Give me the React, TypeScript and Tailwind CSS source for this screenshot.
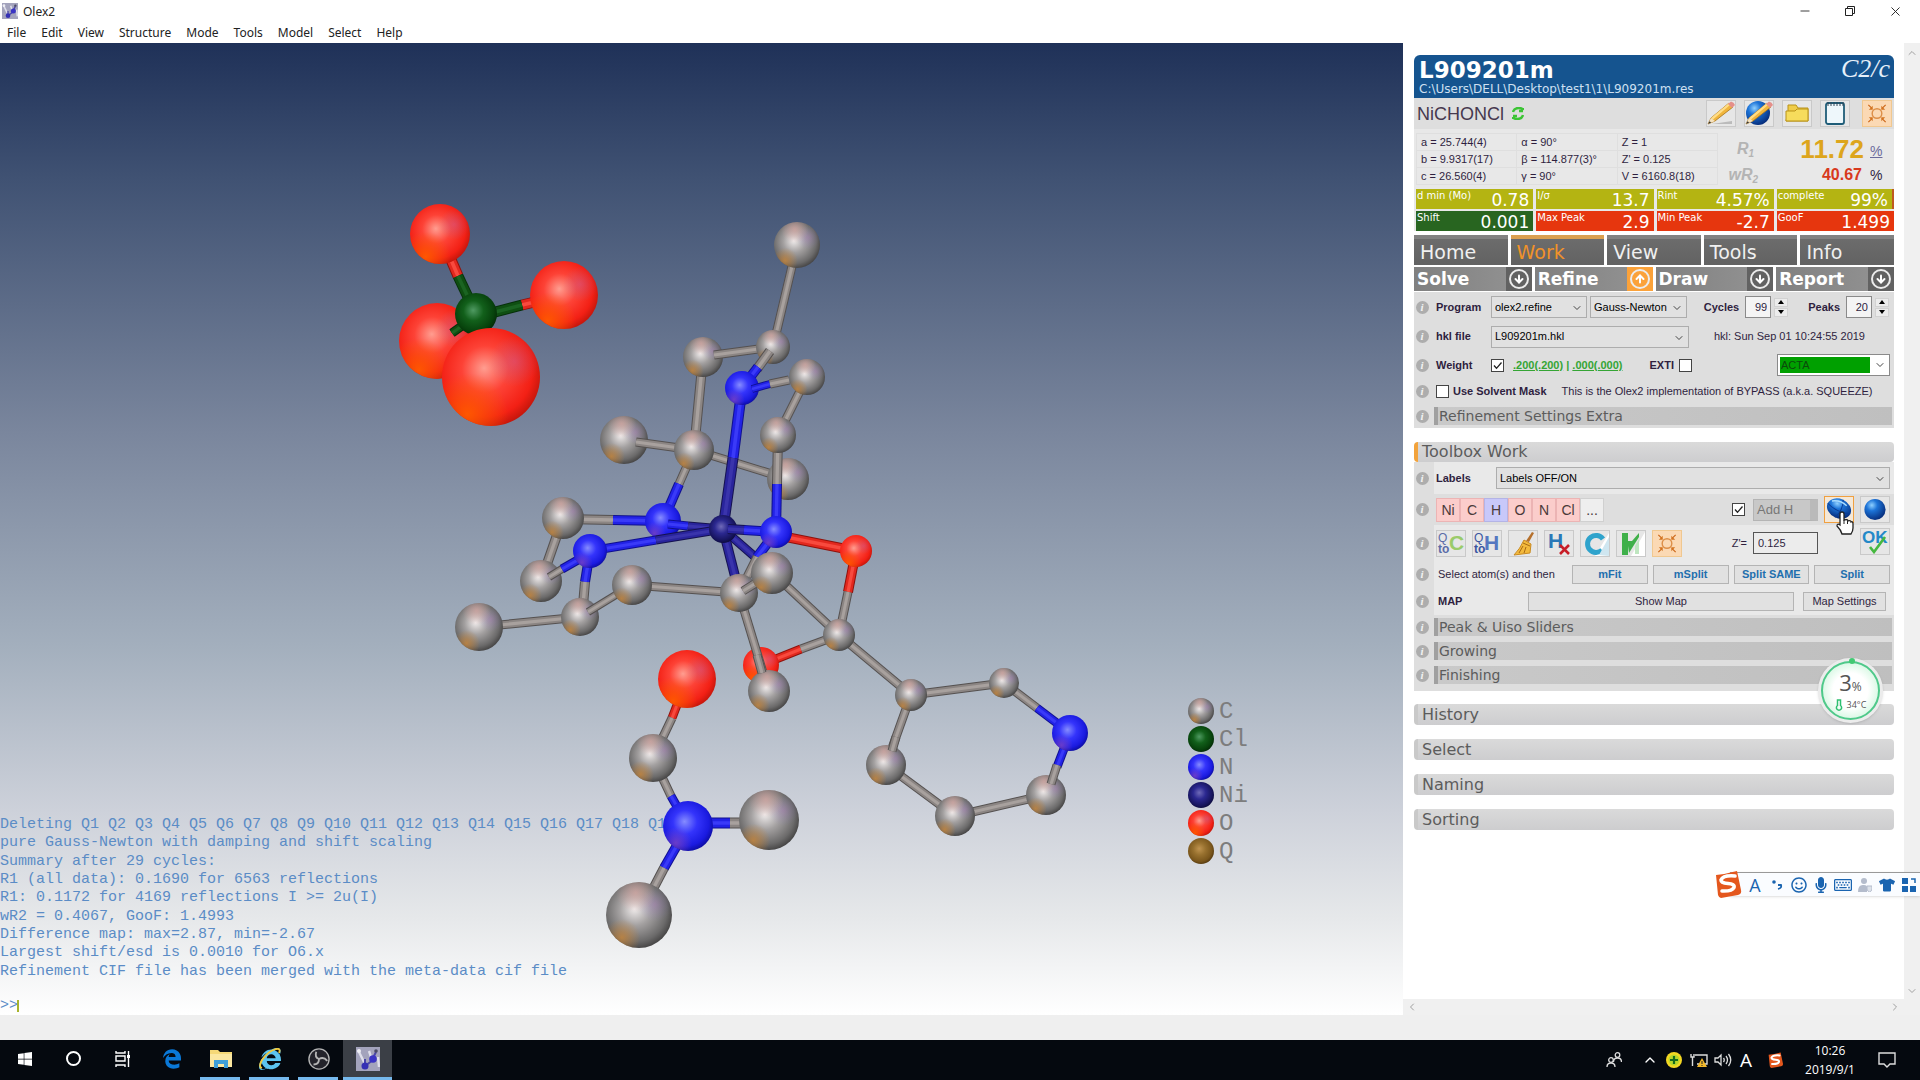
import React from "react";
import { FaInternetExplorer, FaMicrophone, FaRegKeyboard, FaRegSmile, FaTshirt, FaWindows } from "react-icons/fa";
import { FaEdgeLegacy } from "react-icons/fa6";
import { ArrowDown, ArrowUp, ChevronDown, ChevronLeft, ChevronRight, ChevronUp, Minus, X } from "lucide-react";

/* ---------- molecule model ---------- */

type El = "C" | "Cl" | "N" | "Ni" | "O" | "Q";

const SHADES: Record<El, { hi: string; mid: string; low: string; edge: string; bond: string; dark: string; light: string }> = {
  C: { hi: "#efebeb", mid: "#a3a0a0", low: "#6b6a6a", edge: "#3c3b3b", bond: "#8b8583", dark: "#555150", light: "#a8a19e" },
  Cl: { hi: "#4f9a62", mid: "#12601b", low: "#07430c", edge: "#032406", bond: "#0f4f12", dark: "#06300a", light: "#1b6422" },
  N: { hi: "#868cff", mid: "#3434fb", low: "#1a1ae0", edge: "#0a0a94", bond: "#2222e6", dark: "#10108e", light: "#3a3af8" },
  Ni: { hi: "#6f6ab8", mid: "#2b2890", low: "#17155f", edge: "#0a0938", bond: "#29249c", dark: "#15124f", light: "#3a34ac" },
  O: { hi: "#ff9d90", mid: "#fd4236", low: "#f32015", edge: "#b91409", bond: "#e2281e", dark: "#8e120c", light: "#f84a3e" },
  Q: { hi: "#c09450", mid: "#97702e", low: "#7a561c", edge: "#4d340e", bond: "#94692a", dark: "#5d3f12", light: "#c89a52" },
};

type Part =
  | { k: "a"; el: El; x: number; y: number; r: number }
  | { k: "b"; el: El; p: [number, number, number, number]; w: number };

const a = (el: El, x: number, y: number, r: number): Part => ({ k: "a", el, x, y, r });
const b = (el: El, x1: number, y1: number, x2: number, y2: number, w = 9): Part => ({ k: "b", el, p: [x1, y1, x2, y2], w });

/* Painted back to front. */
const PARTS: Part[] = [
  a("O", 437, 341, 38),
  b("O", 440, 234, 458, 276, 11), b("Cl", 458, 276, 476, 314, 11),
  b("O", 564, 295, 522, 305, 11), b("Cl", 522, 305, 476, 317, 11),
  a("O", 440, 234, 30), a("O", 564, 295, 34),
  b("Cl", 476, 316, 452, 333, 9), a("Cl", 476, 314, 21), a("O", 491, 377, 49),

  b("C", 694, 450, 788, 479), a("C", 788, 479, 21),
  b("C", 778, 435, 777, 484, 10), b("N", 777, 484, 776, 532, 10),
  b("C", 797, 245, 773, 347), a("C", 797, 245, 23),
  b("C", 703, 357, 694, 450, 10), a("C", 703, 357, 20),
  b("C", 714, 355, 773, 347), a("C", 773, 347, 17),
  b("C", 770, 351, 757, 369, 10), b("N", 758, 367, 742, 388, 10),
  b("C", 807, 377, 778, 435), a("C", 807, 377, 18), a("C", 778, 435, 18),
  b("N", 742, 388, 733, 458, 11), b("Ni", 733, 458, 723, 529, 11),
  a("N", 742, 388, 17), b("N", 752, 389, 770, 384, 8), b("C", 770, 384, 789, 380, 9),
  a("C", 624, 440, 24), b("C", 636, 442, 694, 450),
  b("C", 694, 450, 679, 484), b("N", 679, 484, 663, 521, 10), a("C", 694, 450, 20),

  b("C", 563, 518, 541, 581, 10), b("C", 563, 519, 613, 520, 10), b("N", 613, 520, 663, 521, 10),
  a("C", 563, 518, 21), a("N", 663, 521, 18),
  b("N", 668, 524, 688, 526, 9), b("Ni", 688, 526, 723, 529, 9),
  b("N", 590, 551, 656, 540), b("Ni", 656, 540, 723, 529),
  a("C", 541, 581, 21), b("C", 549, 577, 562, 569, 8), b("N", 562, 569, 590, 553),
  b("N", 590, 551, 585, 582, 10), b("C", 585, 582, 582, 617, 10), a("N", 590, 551, 17),
  b("C", 479, 627, 580, 617), a("C", 479, 627, 24), a("C", 580, 617, 19),
  b("C", 588, 612, 632, 585, 8), b("C", 632, 585, 739, 593), a("C", 632, 585, 20),

  b("Ni", 723, 529, 762, 563), b("C", 762, 563, 839, 635, 9),
  b("Ni", 723, 529, 739, 592, 10), b("O", 739, 592, 761, 665, 6),
  b("O", 776, 535, 856, 551, 10), b("N", 776, 532, 757, 557, 10), b("C", 757, 557, 739, 593, 9),
  a("Ni", 723, 529, 14), b("Ni", 728, 529, 745, 530, 10), b("N", 744, 530, 776, 532, 10), a("N", 776, 532, 16),
  b("O", 856, 551, 848, 592, 10), b("C", 848, 592, 839, 635, 9), a("O", 856, 551, 16),
  b("O", 761, 665, 801, 649, 9), b("C", 801, 649, 839, 635, 9), a("O", 761, 665, 18),
  b("C", 741, 600, 764, 676, 9), a("C", 739, 593, 19), b("C", 743, 591, 772, 573, 9), a("C", 772, 573, 21),
  a("C", 769, 691, 21), b("C", 757, 655, 762, 673, 9),

  b("C", 839, 635, 911, 695), a("C", 839, 635, 16),
  b("C", 911, 695, 1004, 683), b("C", 911, 695, 886, 765), b("C", 886, 765, 955, 816), b("C", 955, 816, 1046, 795),
  b("C", 1004, 683, 1037, 708), b("N", 1037, 708, 1070, 733), b("N", 1070, 733, 1057, 767),
  a("C", 911, 695, 16), a("C", 1004, 683, 15), a("N", 1070, 733, 18), a("C", 886, 765, 20), a("C", 955, 816, 20), a("C", 1046, 795, 20),
  b("C", 1057, 765, 1051, 784, 9), b("C", 896, 737, 892, 751, 9),

  b("O", 687, 679, 672, 718), b("C", 672, 718, 653, 758), b("C", 653, 758, 671, 796), b("N", 671, 796, 688, 826),
  b("N", 688, 823, 730, 823, 11), b("C", 730, 823, 769, 823, 11), b("N", 688, 826, 664, 868, 10), b("C", 664, 868, 641, 912, 10),
  a("O", 687, 679, 29), a("C", 653, 758, 24), a("N", 688, 826, 25), a("C", 769, 820, 30), a("C", 639, 915, 33),
];

const LEGEND: El[] = ["C", "Cl", "N", "Ni", "O", "Q"];

function Sphere({ el, x, y, r }: { el: El; x: number; y: number; r: number }) {
  return (
    <g>
      <circle cx={x} cy={y} r={r} fill={`url(#s-${el})`} />
      {(el === "C" || el === "O" || el === "N") && <circle cx={x} cy={y} r={r} fill={`url(#warm-${el})`} />}
      {(el === "C" || el === "O") && <circle cx={x} cy={y} r={r} fill="url(#cool)" />}
      {el === "C" && <circle cx={x} cy={y} r={r} fill="url(#pink)" />}
    </g>
  );
}

function Molecule() {
  return (
    <svg className="absolute left-0 top-0 h-full w-full" viewBox="0 43 1403 972" preserveAspectRatio="xMinYMin meet" role="img" aria-label="Crystal structure">
      <defs>
        {LEGEND.map((el) => (
          <radialGradient key={el} id={`s-${el}`} cx="0.46" cy="0.44" r="0.6" fx="0.43" fy="0.41">
            <stop offset="0" stopColor={SHADES[el].hi} />
            <stop offset="0.4" stopColor={SHADES[el].mid} />
            <stop offset="0.78" stopColor={SHADES[el].low} />
            <stop offset="1" stopColor={SHADES[el].edge} />
          </radialGradient>
        ))}
        <radialGradient id="warm-C" cx="0.24" cy="0.84" r="0.28">
          <stop offset="0" stopColor="#c8873c" stopOpacity="0.8" />
          <stop offset="1" stopColor="#c8873c" stopOpacity="0" />
        </radialGradient>
        <radialGradient id="warm-O" cx="0.26" cy="0.88" r="0.42">
          <stop offset="0" stopColor="#ff5a00" stopOpacity="0.95" />
          <stop offset="1" stopColor="#ff5a00" stopOpacity="0" />
        </radialGradient>
        <radialGradient id="warm-N" cx="0.26" cy="0.84" r="0.32">
          <stop offset="0" stopColor="#8a4ac0" stopOpacity="0.7" />
          <stop offset="1" stopColor="#8a4ac0" stopOpacity="0" />
        </radialGradient>
        <radialGradient id="pink" cx="0.45" cy="0.16" r="0.3">
          <stop offset="0" stopColor="#e0a8a2" stopOpacity="0.6" />
          <stop offset="1" stopColor="#e0a8a2" stopOpacity="0" />
        </radialGradient>
        <radialGradient id="cool" cx="0.74" cy="0.34" r="0.26">
          <stop offset="0" stopColor="#b070d0" stopOpacity="0.3" />
          <stop offset="1" stopColor="#8a80d0" stopOpacity="0" />
        </radialGradient>
      </defs>
      {PARTS.map((p, i) => {
        if (p.k === "a") return <Sphere key={i} el={p.el} x={p.x} y={p.y} r={p.r} />;
        const [x1, y1, x2, y2] = p.p;
        const s = SHADES[p.el];
        return (
          <g key={i}>
            <line x1={x1} y1={y1} x2={x2} y2={y2} stroke={s.dark} strokeWidth={p.w} />
            <line x1={x1} y1={y1} x2={x2} y2={y2} stroke={s.bond} strokeWidth={p.w - 2} />
            <line x1={x1} y1={y1} x2={x2} y2={y2} stroke={s.light} strokeWidth={p.w / 3} />
          </g>
        );
      })}
      {LEGEND.map((el, i) => (
        <g key={el}>
          <Sphere el={el} x={1201} y={711 + i * 28} r={13} />
          <text x="1219" y={718 + i * 28} fill="#7d7d7d" fontSize="24" fontFamily='"Liberation Mono", monospace'>{el}</text>
        </g>
      ))}
    </svg>
  );
}

const LOG = [
  "Deleting Q1 Q2 Q3 Q4 Q5 Q6 Q7 Q8 Q9 Q10 Q11 Q12 Q13 Q14 Q15 Q16 Q17 Q18 Q1",
  "pure Gauss-Newton with damping and shift scaling",
  "Summary after 29 cycles:",
  "R1 (all data): 0.1690 for 6563 reflections",
  "R1: 0.1172 for 4169 reflections I >= 2u(I)",
  "wR2 = 0.4067, GooF: 1.4993",
  "Difference map: max=2.87, min=-2.67",
  "Largest shift/esd is 0.0010 for O6.x",
  "Refinement CIF file has been merged with the meta-data cif file",
];

/* ---------- small pictures ---------- */

function OlexIcon({ className }: { className: string }) {
  return (
    <svg viewBox="0 0 24 24" className={className} aria-hidden="true">
      <rect width="24" height="24" fill="#a3a3bc" />
      <path d="M2 3l7 14M13 4l3 9M22 10l1 10" stroke="#dedeea" strokeWidth="2.400" fill="none" />
      <path d="M9 19V12M16 13l4-8M9 19l8-6" stroke="#4a46a8" strokeWidth="2" fill="none" />
      <circle cx="9" cy="19" r="3.500" fill="#3530b4" />
      <circle cx="17" cy="12" r="3.800" fill="#3a34c4" />
      <circle cx="20" cy="4" r="1.800" fill="#4a4a66" />
      <circle cx="3" cy="4" r="2" fill="#eeeef4" />
    </svg>
  );
}

function Pencil() {
  return (
    <g>
      <path d="M1 23l3-6L22 2l4 4L8 20z" fill="#f0b53c" stroke="#a8741c" strokeWidth="0.8" />
      <path d="M4 17L22 2l1.600 1.600L6 18.600z" fill="#ffdd86" />
      <path d="M21 3l3-2.600q3 .6 4 3.600L25 7z" fill="#e58f8a" />
      <path d="M1 23l3-6 4 3z" fill="#f4e2c0" />
      <path d="M1 23l1.500-2.800 1.700 1.200z" fill="#333" />
    </g>
  );
}

function Ball({ ellipse = false }: { ellipse?: boolean }) {
  return (
    <svg viewBox="0 0 28 26" className="h-full w-full" aria-hidden="true">
      <defs>
        <radialGradient id="ball" cx="0.35" cy="0.3" r="0.75">
          <stop offset="0" stopColor="#8fd0ff" />
          <stop offset="0.35" stopColor="#1d74d8" />
          <stop offset="1" stopColor="#052a78" />
        </radialGradient>
      </defs>
      {ellipse ? (
        <g transform="rotate(25 14 12)">
          <ellipse cx="14" cy="12" rx="13" ry="10" fill="url(#ball)" />
          <path d="M1 12q13 5 26 0M14 2q5 10 0 20" stroke="#0b3c94" fill="none" />
          <path d="M4 8q8-5 16-2" stroke="#a8dcff" strokeWidth="1.500" fill="none" />
        </g>
      ) : (
        <circle cx="14" cy="13" r="11" fill="url(#ball)" />
      )}
    </svg>
  );
}

function Grow() {
  return (
    <svg viewBox="0 0 28 26" className="h-full w-full" aria-hidden="true">
      <circle cx="14" cy="13" r="5" fill="none" stroke="#dd8f48" strokeWidth="1.500" />
      <path d="M5 4l4 4M23 4l-4 4M5 22l4-4M23 22l-4-4" stroke="#cc6618" strokeWidth="1.200" />
      <path d="M9.500 5v4H5.500zM18.500 5v4h4zM9.500 21v-4H5.500zM18.500 21v-4h4z" fill="#d4741f" />
    </svg>
  );
}

function SogouS({ className }: { className: string }) {
  return (
    <svg viewBox="0 0 28 28" className={className} aria-hidden="true">
      <path d="M2 5Q12 4 23 1l4 19q1 4-3 5l-17 3q-2 0-3-3z" fill="#e4571d" />
      <path d="M21 6q-12-1-14 4 0 3 7 3.500 7 .5 6 4-2 4-12 3.500" stroke="#fff" strokeWidth="3.600" fill="none" strokeLinecap="round" />
    </svg>
  );
}

function Info() {
  return (
    <button aria-label="Help" className="flex h-[13px] w-[13px] shrink-0 items-center justify-center rounded-full bg-[#adadad] font-['Liberation_Serif',serif] text-[11px] font-bold italic leading-none text-[#f2f2f2]">
      i
    </button>
  );
}

/* ---------- panel pieces ---------- */

function Row({ h, alt, children }: { h: string; alt?: boolean; children: React.ReactNode }) {
  return (
    <div className={`flex items-stretch ${h}`}>
      <div className="flex w-5 shrink-0 items-center justify-center bg-[#dedede] pr-1"><Info /></div>
      <div className={`flex min-w-0 flex-1 items-center ${alt ? "bg-[#e9e9e9]" : "bg-[#dedede]"}`}>{children}</div>
    </div>
  );
}

function Drop({ label, value, className }: { label: string; value: string; className: string }) {
  return (
    <div className={`relative h-[22px] ${className}`}>
      <select aria-label={label} defaultValue={value} className="h-full w-full appearance-none border border-[#adadad] bg-[#e1e1e1] pl-[3px] text-[11px] text-black">
        <option>{value}</option>
      </select>
      <ChevronDown className="pointer-events-none absolute right-1 top-[6px] h-3 w-3 text-[#444]" />
    </div>
  );
}

function Check({ label, on, children }: { label: string; on?: boolean; children?: React.ReactNode }) {
  return (
    <label className="flex items-center gap-[5px]">
      {children}
      <span className="relative h-[13px] w-[13px]">
        <input type="checkbox" aria-label={label} defaultChecked={on} className="block h-[13px] w-[13px] appearance-none border border-[#444] bg-white" />
        {on && (
          <svg viewBox="0 0 13 13" className="pointer-events-none absolute left-0 top-0 h-[13px] w-[13px]" aria-hidden="true">
            <path d="M3 6.500l2.500 2.800L10.500 3.500" stroke="#222" strokeWidth="1.300" fill="none" />
          </svg>
        )}
      </span>
    </label>
  );
}

function Spin({ label, value }: { label: string; value: string }) {
  return (
    <div className="flex items-center gap-[3px]">
      <input aria-label={label} defaultValue={value} className="h-[22px] w-[26px] border border-[#8a8a8a] bg-[#f4f4f4] pr-[3px] text-right text-[11px]" />
      <div className="flex w-[14px] flex-col gap-px">
        <button aria-label={`More ${label}`} className="flex h-[9px] items-center justify-center border border-[#d2d2d2] bg-[#ececec]"><svg viewBox="0 0 6 4" className="h-[4px] w-[6px]"><path d="M0 4h6L3 0z" /></svg></button>
        <button aria-label={`Fewer ${label}`} className="flex h-[9px] items-center justify-center border border-[#d2d2d2] bg-[#ececec]"><svg viewBox="0 0 6 4" className="h-[4px] w-[6px]"><path d="M0 0h6L3 4z" /></svg></button>
      </div>
    </div>
  );
}

function Fold({ children }: { children: React.ReactNode }) {
  return (
    <button className="mr-0.5 flex h-[18px] flex-1 items-center border-l-4 border-[#a0a0a0] bg-gradient-to-r from-[#c9c9c9] to-[#bfbfbf] pl-px text-left font-['DejaVu_Sans',sans-serif] text-[14px] leading-none text-[#5c5c5c]">
      {children}
    </button>
  );
}

function Tile({ label, className = "border-[#c9c9c9] bg-[#e6e6e6]", children }: { label: string; className?: string; children: React.ReactNode }) {
  return <button aria-label={label} className={`h-[27px] w-[30px] shrink-0 border ${className}`}>{children}</button>;
}

const METRICS = [
  ["d min (Mo)", "0.78", "bg-[#b4b412]"], ["I/σ", "13.7", "bg-[#b4b412]"], ["Rint", "4.57%", "bg-[#b4b412]"], ["complete", "99%", "bg-[#b4b412] border-r-2 border-[#c05a20]"],
  ["Shift", "0.001", "bg-[#286520]"], ["Max Peak", "2.9", "bg-[#e6360e]"], ["Min Peak", "-2.7", "bg-[#e6360e]"], ["GooF", "1.499", "bg-[#e6360e]"],
];

const CELL = [
  ["a = 25.744(4)", "α = 90°", "Z = 1"],
  ["b = 9.9317(17)", "β = 114.877(3)°", "Z' = 0.125"],
  ["c = 26.560(4)", "γ = 90°", "V = 6160.8(18)"],
];

function Glyph({ children }: { children: React.ReactNode }) {
  return <svg viewBox="0 0 28 25" className="h-full w-full" fontFamily='"Liberation Sans", sans-serif' aria-hidden="true">{children}</svg>;
}

function Panel() {
  return (
    <aside className="flex w-[517px] shrink-0 bg-white">
      <div className="flex min-w-0 flex-1 flex-col">
        <div className="flex-1 pl-[11px] pr-[10px] pt-3 font-['Liberation_Sans',sans-serif] text-[11px] text-[#2f1f3f]">
          <header className="relative h-[43px] rounded-t-md bg-[#15548f] pl-[5px] font-['DejaVu_Sans',sans-serif] text-white">
            <h1 className="pt-[2px] text-[23px] font-bold leading-[26px]">L909201m</h1>
            <p className="text-[12px] leading-3 text-[#cfe0f2]">C:\Users\DELL\Desktop\test1\1\L909201m.res</p>
            <span className="absolute right-1 top-0 font-['Liberation_Serif',serif] text-[26px] italic leading-7 text-[#e6f0fa]">C2/c</span>
          </header>
          <div className="flex h-[31px] items-center bg-[#dedede] pl-[3px] pr-0.5">
            <span className="text-lg text-[#46394f]">NiCHONCl</span>
            <svg viewBox="0 0 12 13" className="ml-2 h-[13px] w-3" aria-label="Refresh"><path d="M1 5q1-4 6-4 3 0 4 2V1M11 8q-1 4-6 4-3 0-4-2v2M11 4H7M1 9h4" stroke="#3cc435" strokeWidth="2.500" fill="none" /></svg>
            <div className="ml-auto flex gap-2">
              <Tile label="Edit"><svg viewBox="0 0 28 25" className="h-full w-full"><path d="M5 23l20-3v3z" fill="#bbb" /><Pencil /></svg></Tile>
              <Tile label="Edit model"><svg viewBox="0 0 28 25" className="h-full w-full"><circle cx="13" cy="12" r="12" fill="url(#ball)" /><Pencil /></svg></Tile>
              <Tile label="Open folder"><svg viewBox="0 0 28 25" className="h-full w-full"><path d="M5 4h8l2 3h10v13H3l2-10z" fill="#f0cc48" stroke="#b99318" /><path d="M3 10h9l2-2h11v12H3z" fill="#f6dc5c" stroke="#b99318" /></svg></Tile>
              <Tile label="Notes"><svg viewBox="0 0 28 25" className="h-full w-full"><rect x="5" y="2" width="18" height="21" rx="2" fill="#eef7fb" stroke="#1f5d78" strokeWidth="1.800" /><path d="M7 1v4M10 1v4M13 1v4M16 1v4M19 1v4M22 1v4" stroke="#345" /></svg></Tile>
              <span className="ml-1 flex"><Tile label="Centre" className="border-[#f0c890] bg-[#fbd9b4]"><Grow /></Tile></span>
            </div>
          </div>
          <div className="flex h-[60px] items-start bg-[#e8e8e8] pt-1">
            <table className="ml-0.5 w-[302px] border-collapse">
              <tbody>
                {CELL.map((r) => (
                  <tr key={r[0]} className="h-[17px]">
                    {r.map((c) => <td key={c} className="w-[98px] border border-[#dfdfdf] pl-1 leading-[15px]">{c}</td>)}
                  </tr>
                ))}
              </tbody>
            </table>
            <div className="flex flex-1 flex-col pr-[10px]">
              <div className="flex h-8 items-center">
                <i className="w-[36px] text-right text-base font-bold text-[#b4b4b4]">R<sub className="text-[10px]">1</sub></i>
                <b className="ml-auto text-[26px] leading-none text-[#dda51c]">11.72</b>
                <a href="#r1" className="ml-[6px] w-[14px] pt-1 text-[14px] text-[#6a6a9c] underline">%</a>
              </div>
              <div className="flex h-5 items-center">
                <i className="w-[40px] text-right text-base font-bold text-[#b4b4b4]">wR<sub className="text-[10px]">2</sub></i>
                <b className="ml-auto text-base leading-none text-[#d8391c]">40.67</b>
                <span className="ml-2 w-[14px] text-sm">%</span>
              </div>
            </div>
          </div>
          <div className="grid grid-cols-4 gap-x-[3px] gap-y-[2px] bg-[#e8e8e8] pl-0.5 font-['DejaVu_Sans',sans-serif] text-white">
            {METRICS.map(([l, v, c]) => (
              <div key={l} className={`flex h-5 justify-between px-px ${c}`}>
                <span className="whitespace-nowrap text-[10px] leading-[14px]">{l}</span>
                <span className="pr-[3px] text-[17px] leading-[22px]">{v}</span>
              </div>
            ))}
          </div>
          <nav className="mt-1 grid grid-cols-5 gap-[3px] font-['DejaVu_Sans',sans-serif] text-[19px]">
            {["Home", "Work", "View", "Tools", "Info"].map((t) => (
              <button key={t} className={`h-[30px] border-t-4 bg-gradient-to-b from-[#6c6c6c] to-[#626262] pb-px pl-[6px] text-left leading-6 ${t === "Work" ? "border-[#dba050] text-[#f0922a]" : "border-[#828282] text-[#f0f0f0]"}`}>{t}</button>
            ))}
          </nav>
          <div className="mt-0.5 grid grid-cols-4 gap-[3px] font-['DejaVu_Sans',sans-serif] text-[17px] font-bold text-white">
            {["Solve", "Refine", "Draw", "Report"].map((t) => (
              <button key={t} className="flex h-6 items-center justify-between bg-gradient-to-r from-[#808080] to-[#949494] pl-[3px] leading-none">
                {t}
                <span className={`flex h-6 w-[26px] items-center justify-center ${t === "Refine" ? "bg-[#fba23a]" : "bg-[#626262]"}`}>
                  <span className="flex h-5 w-5 items-center justify-center rounded-full border-2 border-[#ececec]">
                    {t === "Refine" ? <ArrowUp className="h-3 w-3" strokeWidth={4} /> : <ArrowDown className="h-3 w-3" strokeWidth={4} />}
                  </span>
                </span>
              </button>
            ))}
          </div>

          <section className="mt-px bg-[#dedede]">
            <Row h="h-[30px]">
              <b className="w-[57px] pl-0.5">Program</b>
              <Drop label="Program" value="olex2.refine" className="w-24" />
              <Drop label="Method" value="Gauss-Newton" className="ml-[3px] w-[97px]" />
              <b className="ml-auto mr-[6px]">Cycles</b><Spin label="Cycles" value="99" />
              <b className="ml-5 mr-[6px]">Peaks</b><span className="mr-[5px]"><Spin label="Peaks" value="20" /></span>
            </Row>
            <Row h="h-[29px]">
              <b className="w-[57px] pl-0.5">hkl file</b>
              <Drop label="hkl file" value="L909201m.hkl" className="w-[198px]" />
              <span className="ml-auto mr-[29px]">hkl: Sun Sep 01 10:24:55 2019</span>
            </Row>
            <Row h="h-[28px]">
              <b className="w-[57px] pl-0.5">Weight</b>
              <Check label="Weight" on />
              <span className="ml-[9px] font-bold text-[#35a535]"><a href="#w1" className="underline">.200(.200)</a> | <a href="#w2" className="underline">.000(.000)</a></span>
              <span className="ml-[27px] font-bold"><Check label="EXTI">EXTI</Check></span>
              <div className="relative ml-auto mr-1 h-[22px] w-[113px]">
                <select aria-label="Instruction" defaultValue="ACTA" className="h-full w-full appearance-none border border-[#8a8a8a] bg-white bg-[linear-gradient(#00a000,#00a000)] bg-[length:90px_16px] bg-[position:2px_2px] bg-no-repeat pl-[3px] text-[11px] text-[#0b4a0b]"><option>ACTA</option></select>
                <ChevronDown className="pointer-events-none absolute right-1 top-[5px] h-3 w-3 text-[#444]" />
              </div>
            </Row>
            <Row h="h-[25px]">
              <label className="flex items-center gap-1 pl-0.5 font-bold"><input type="checkbox" className="h-[13px] w-[13px] appearance-none border border-[#444] bg-white" />Use Solvent Mask</label>
              <span className="ml-[15px] whitespace-nowrap">This is the Olex2 implementation of BYPASS (a.k.a. SQUEEZE)</span>
            </Row>
            <Row h="h-6"><Fold>Refinement Settings Extra</Fold></Row>
          </section>

          <button className="mt-[14px] flex h-5 w-full items-center rounded-sm border-l-4 border-[#f2a33c] bg-gradient-to-b from-[#dadada] to-[#cdcdcf] pl-1 font-['DejaVu_Sans',sans-serif] text-[16px] leading-none text-[#5c5c5c]">Toolbox Work</button>
          <section className="bg-[#dedede] pb-1">
            <Row h="h-8" alt>
              <b className="w-[62px] pl-0.5">Labels</b>
              <Drop label="Labels" value="Labels OFF/ON" className="mr-1 flex-1" />
            </Row>
            <Row h="h-[31px]">
              <div className="ml-0.5 flex text-sm text-[#4a3a3a]">
                {["Ni", "C", "H", "O", "N", "Cl", "..."].map((e) => (
                  <button key={e} className={`h-6 w-6 border leading-none ${e === "H" ? "border-[#b4b4e6] bg-[#c8c8fa]" : e === "..." ? "border-[#d0d0d0] bg-[#eeeeee]" : "border-[#ecb4b4] bg-[#fbcdcb]"}`}>{e}</button>
                ))}
              </div>
              <span className="ml-auto"><Check label="Add hydrogens" on /></span>
              <button className="ml-2 h-[22px] w-[65px] border border-r-8 border-[#b4b4b4] border-r-[#bababa] bg-[#c8c8c8] pl-[3px] text-left text-[13px] leading-none text-[#777]">Add H</button>
              <span className="ml-[6px] flex gap-[6px] pr-1">
                <Tile label="Ellipsoids" className="border-[#f0a040] bg-[#f4e8d8]"><Ball ellipse /></Tile>
                <Tile label="Spheres"><Ball /></Tile>
              </span>
            </Row>
            <Row h="h-9" alt>
              <div className="ml-0.5 flex gap-[6px]">
                <Tile label="Q to C"><Glyph><text x="1" y="11" fontSize="12" fill="#5a6ca8">Q</text><text x="1" y="22" fontSize="12" fontWeight="bold" fill="#5a6ca8">to</text><text x="12" y="19" fontSize="21" fontWeight="bold" fill="#9acb6a">C</text></Glyph></Tile>
                <Tile label="Q to H"><Glyph><text x="1" y="11" fontSize="12" fill="#3a55a0">Q</text><text x="1" y="22" fontSize="12" fontWeight="bold" fill="#3a55a0">to</text><text x="11" y="19" fontSize="21" fontWeight="bold" fill="#5577c0">H</text></Glyph></Tile>
                <Tile label="Tidy"><Glyph><path d="M23 1l2 1-5 9-3-1z" fill="#b5702c" /><path d="M15 9l7 4-1 9-16 2q6-6 10-15z" fill="#f3b93c" stroke="#c98a20" /><path d="M14 12l7 3M10 22l4-7M15 22l2-6" stroke="#a86a14" /></Glyph></Tile>
                <Tile label="Remove H"><Glyph><text x="3" y="17" fontSize="21" fontWeight="bold" fill="#2a78b8">H</text><path d="M15 14l9 9M24 14l-9 9" stroke="#c81e28" strokeWidth="2.600" /></Glyph></Tile>
                <Tile label="Swap C"><Glyph><path d="M28 2v23H14z" fill="#fff" /><path d="M22 8a8.500 8.500 0 1 0-1 11" stroke="#2fa3cc" strokeWidth="5" fill="none" /><path d="M28 6L18 24l10 1z" fill="#cfe6f0" /></Glyph></Tile>
                <Tile label="Swap H"><Glyph><path d="M28 1v24H14z" fill="#fff" /><path d="M5 2h6v8h4l7-8v4L12 22l-1-7v9H5z" fill="#3fb04a" /><path d="M22 8v15h-4v-8z" fill="#bfe6c0" /></Glyph></Tile>
                <Tile label="Grow" className="border-[#f0c890] bg-[#fbd9b4]"><Grow /></Tile>
              </div>
              <label className="ml-auto flex items-center gap-[6px]">Z'=
                <input defaultValue="0.125" className="h-[22px] w-[65px] border border-[#555] bg-[#ececec] pl-1 text-[11px]" />
              </label>
              <span className="ml-[42px] pr-1"><Tile label="OK"><Glyph><text x="1" y="14" fontSize="17" fontWeight="bold" fill="#2489c8">OK</text><path d="M9 18l4 5 11-15" stroke="#46b840" strokeWidth="2.600" fill="none" /></Glyph></Tile></span>
            </Row>
            <Row h="h-[27px]" alt>
              <span className="w-[138px] whitespace-nowrap pl-1">Select atom(s) and then</span>
              <div className="mr-1 grid flex-1 grid-cols-4 gap-[5px] text-[#1f6fae]">
                {["mFit", "mSplit", "Split SAME", "Split"].map((t) => <button key={t} className="h-[19px] border border-[#b4b4b4] bg-[#e1e1e1] font-bold leading-none">{t}</button>)}
              </div>
            </Row>
            <Row h="h-[27px]" alt>
              <b className="w-[94px] pl-1">MAP</b>
              <button className="h-[19px] flex-1 border border-[#b4b4b4] bg-[#e1e1e1] leading-none">Show Map</button>
              <button className="ml-[9px] mr-2 h-[19px] w-[83px] border border-[#b4b4b4] bg-[#e1e1e1] leading-none">Map Settings</button>
            </Row>
            {["Peak & Uiso Sliders", "Growing", "Finishing"].map((t) => <Row key={t} h="h-6"><Fold>{t}</Fold></Row>)}
          </section>
          <div className="mt-[13px] flex flex-col gap-[14px]">
            {["History", "Select", "Naming", "Sorting"].map((t) => (
              <button key={t} className="flex h-[21px] items-center rounded-sm border-l-4 border-[#c9c9c9] bg-gradient-to-b from-[#dadada] to-[#cdcdcf] pl-1 font-['DejaVu_Sans',sans-serif] text-[16px] leading-none text-[#5c5c5c]">{t}</button>
            ))}
          </div>
        </div>
        <div className="flex h-4 items-center justify-between bg-[#f0f0f0] px-[3px] text-[#a0a0a0]"><ChevronLeft className="h-3 w-3" /><ChevronRight className="h-3 w-3" /></div>
      </div>
      <div className="flex w-4 flex-col items-center justify-between bg-[#f0f0f0] pb-[18px] pt-1 text-[#a0a0a0]"><ChevronUp className="h-3 w-3" /><ChevronDown className="h-3 w-3" /></div>
    </aside>
  );
}

function TempWidget() {
  return (
    <div className="absolute left-[1818px] top-[658px] flex h-[65px] w-[65px] flex-col items-center justify-center rounded-full bg-[#ececec] font-['Open_Sans',sans-serif] text-[#555] shadow">
      <div className="flex h-[59px] w-[59px] flex-col items-center justify-center rounded-full border-2 border-[#4fc98a] bg-[radial-gradient(circle,#ffffff_45%,#b6f2cc_100%)]">
        <div className="text-[22px] leading-6">3<span className="text-[12px]">%</span></div>
        <div className="flex items-center gap-1 text-[9px] leading-3">
          <svg viewBox="0 0 8 12" className="h-3 w-2" aria-hidden="true"><path d="M2.500 1h3v5.500a2.600 2.600 0 1 1-3 0z" fill="none" stroke="#2fc070" strokeWidth="1.500" /></svg>34°C
        </div>
      </div>
      <span className="absolute left-[31px] top-0 h-[6px] w-[6px] rounded-full bg-[#43c973]" />
    </div>
  );
}

function ImeBar() {
  const slot = "flex w-[22px] shrink-0 justify-center";
  return (
    <div className="absolute right-0 top-[872px] flex h-6 w-[190px] items-center border-t border-[#999] bg-[#fafcff] pl-[14px] text-[#1a64b0] shadow-sm">
      <SogouS className="absolute -left-4 -top-[3px] h-7 w-7" />
      <span className={`${slot} font-['Open_Sans',sans-serif] text-lg leading-none`}>A</span>
      <span className={slot}><svg viewBox="0 0 14 14" className="h-[14px] w-[14px]" aria-hidden="true"><circle cx="4" cy="4" r="1.800" fill="currentColor" /><path d="M8 7h3q1 3-3 4" fill="none" stroke="currentColor" strokeWidth="1.800" /></svg></span>
      <span className={slot}><FaRegSmile className="h-4 w-4" /></span>
      <span className={slot}><FaMicrophone className="h-4 w-4" /></span>
      <span className={slot}><FaRegKeyboard className="h-[18px] w-[18px]" /></span>
      <span className={slot}><svg viewBox="0 0 14 14" className="h-[14px] w-[14px] text-[#b4bccc]" aria-hidden="true"><circle cx="6" cy="3" r="3" fill="currentColor" /><path d="M0 14q0-8 6-7 3 0 3 2v5z" fill="currentColor" /><path d="M9 8h5v3q0 2-2.500 3Q9 13 9 11z" fill="#dde2ea" stroke="currentColor" /></svg></span>
      <span className={slot}><FaTshirt className="h-4 w-4" /></span>
      <span className={slot}><svg viewBox="0 0 14 14" className="h-[14px] w-[14px]" aria-hidden="true"><path d="M0 0h6v6H0zM0 8h6v6H0zM8 8h6v6H8z" fill="currentColor" /><path d="M9 1h4v4" fill="none" stroke="currentColor" strokeWidth="1.500" /></svg></span>
    </div>
  );
}

function Taskbar() {
  const slot = "flex h-10 w-[49px] items-center justify-center border-b-[3px]";
  return (
    <footer className="flex h-10 items-center bg-[#05090f] text-white">
      <button aria-label="Start" className={`${slot} border-transparent`}><FaWindows className="h-4 w-4" /></button>
      <button aria-label="Cortana" className={`${slot} border-transparent`}><span className="h-[15px] w-[15px] rounded-full border-2 border-white" /></button>
      <button aria-label="Task view" className={`${slot} border-transparent`}><svg viewBox="0 0 16 16" className="h-4 w-4" aria-hidden="true"><path d="M1 0v2h9V0M1 5h9v5H1zM1 16v-2h9v2M13.500 0v16" stroke="#fff" strokeWidth="1.400" fill="none" /><path d="M12 4h3v3h-3z" fill="#fff" /></svg></button>
      <button aria-label="Edge" className={`${slot} border-transparent`}><FaEdgeLegacy className="h-5 w-5 text-[#0a78d7]" /></button>
      <button aria-label="File Explorer" className={`${slot} border-transparent`}>
        <svg viewBox="0 0 22 20" className="h-5 w-[22px]" aria-hidden="true"><path d="M0 1h8l2 2h12v15H0z" fill="#f5d877" /><path d="M0 5h22v13H0z" fill="#fbe7a0" /><path d="M4 11h14v8h-4v-4H8v4H4z" fill="#3f9fd8" /></svg>
      </button>
      <button aria-label="Internet Explorer" className={`${slot} border-transparent`}>
        <span className="relative h-[22px] w-[22px]">
          <FaInternetExplorer className="h-[22px] w-[22px] text-[#5cc4f0]" />
          <svg viewBox="0 0 22 22" className="absolute left-0 top-0 h-[22px] w-[22px]" aria-hidden="true"><path d="M3 20Q-1 19 3 12 9 3 17 1q5-1 3 4" fill="none" stroke="#f0c83c" strokeWidth="1.800" /></svg>
        </span>
      </button>
      <button aria-label="OBS" className={`${slot} border-transparent`}>
        <svg viewBox="0 0 24 24" className="h-[22px] w-[22px]" aria-hidden="true"><circle cx="12" cy="12" r="11" fill="#23232a" stroke="#b4b4b4" strokeWidth="1.500" /><path d="M12 12q-5-2-3-8M12 12q5-3 9 2M12 12q0 6-6 6" stroke="#b4b4b4" strokeWidth="2" fill="none" /></svg>
      </button>
      <button aria-label="Olex2" className={`${slot} border-[#76b9ed] bg-[#3b3f46]`}><OlexIcon className="h-6 w-6" /></button>
      <div className="ml-auto flex items-center pr-6">
        <svg viewBox="0 0 16 16" className="h-4 w-4" fill="none" stroke="#ddd" strokeWidth="1.300" aria-label="People"><circle cx="11.500" cy="3" r="2.300" /><path d="M7.500 10q0-4 4-4t4 4" /><circle cx="5" cy="8" r="2.300" /><path d="M1 15q0-4 4-4t4 4" /></svg>
        <ChevronUp className="ml-5 h-4 w-4" />
        <svg viewBox="0 0 16 16" className="ml-2 h-4 w-4" aria-label="Security"><circle cx="8" cy="8" r="8" fill="#f4d722" /><circle cx="8" cy="8" r="5.500" fill="#b8d62a" /><path d="M8 4v8M4 8h8" stroke="#176b1c" strokeWidth="2.200" /></svg>
        <svg viewBox="0 0 18 16" className="ml-2 h-4 w-[18px]" aria-label="Network"><path d="M5 3h12v9H7M1 2v3h3V2M2.500 5v9" stroke="#ddd" strokeWidth="1.400" fill="none" /><path d="M12 6l5 9H7z" fill="#f4b92a" /><path d="M12 9v3M12 13v1" stroke="#222" /></svg>
        <svg viewBox="0 0 18 14" className="ml-[6px] h-[14px] w-[18px]" fill="none" stroke="#ddd" strokeWidth="1.300" aria-label="Volume"><path d="M1 5h3l3-3v10L4 9H1zM9.500 5q1.500 2 0 4M12 3q3 4 0 8M14.500 1q4.500 6 0 12" /></svg>
        <span className="ml-[6px] w-4 text-center font-['Open_Sans',sans-serif] text-[19px] leading-none">A</span>
        <SogouS className="ml-[13px] h-4 w-[17px]" />
        <div className="ml-[14px] w-16 text-center font-['Open_Sans',sans-serif] text-[12px] leading-[19px]">10:26<br />2019/9/1</div>
        <svg viewBox="0 0 18 18" className="ml-4 h-[18px] w-[18px]" fill="none" stroke="#ddd" strokeWidth="1.400" aria-label="Notifications"><path d="M1 2h16v11h-5l-3 3-3-3H1z" /></svg>
      </div>
    </footer>
  );
}

export default function App() {
  return (
    <div className="relative flex min-h-screen flex-col overflow-hidden bg-white font-['Noto_Sans','Noto_Sans_CJK_SC',sans-serif] text-[12px] text-[#222]">
      <div className="flex h-[22px] items-center pl-0.5">
        <OlexIcon className="h-4 w-4" />
        <span className="ml-[5px] pt-0.5">Olex2</span>
        <div className="ml-auto flex items-center gap-[31px] pr-[17px]">
          <button aria-label="Minimize"><Minus className="h-[14px] w-[14px]" strokeWidth={1.500} /></button>
          <button aria-label="Restore"><svg viewBox="0 0 14 14" className="h-[14px] w-[14px]" fill="none" stroke="#222"><path d="M2.500 4.500h7v7h-7zM4.500 4.500v-2h7v7h-2" /></svg></button>
          <button aria-label="Close"><X className="h-[15px] w-[15px]" strokeWidth={1.500} /></button>
        </div>
      </div>
      <nav className="flex h-[21px] items-center gap-[15px] pl-[7px]">
        {["File", "Edit", "View", "Structure", "Mode", "Tools", "Model", "Select", "Help"].map((m) => <button key={m} className="leading-none">{m}</button>)}
      </nav>
      <main className="flex flex-1">
        <div className="relative flex min-w-0 flex-1 flex-col justify-end overflow-hidden bg-[linear-gradient(#1f3158_0%,#405273_14%,#7a869d_40%,#a3afbd_62%,#cdd1da_79%,#e6e8ea_90%,#ffffff_100%)] font-['Liberation_Mono',monospace] text-[15px] text-[#5b8cc6]">
          <div className="grid h-[165px] auto-rows-fr">
            {LOG.map((l) => <p key={l} className="whitespace-pre leading-[18px]">{l}</p>)}
          </div>
          <label className="mt-4 flex h-[18px] items-center">&gt;&gt;<input aria-label="Command" className="-ml-px h-3 w-64 border-l-2 border-[#a8b42c] bg-transparent leading-4" /></label>
          <Molecule />
        </div>
        <Panel />
      </main>
      <div className="h-[25px] bg-[#efefef]" />
      <Taskbar />
      <span className="absolute bottom-0 left-[200px] flex gap-[9px]">
        <i className="h-[3px] w-10 bg-[#76b9ed]" /><i className="h-[3px] w-10 bg-[#76b9ed]" /><i className="h-[3px] w-10 bg-[#76b9ed]" />
      </span>
      <TempWidget />
      <ImeBar />
      <svg viewBox="0 0 18 24" className="absolute left-[1836px] top-[511px] h-6 w-[18px]" aria-hidden="true">
        <path d="M6 1q2 0 2 2v6q4-1 4 1 3-1 3 1 2-1 2 2v4q0 3-2 6H6q-1-4-5-8 0-3 3-1V3q0-2 2-2z" fill="#fff" stroke="#222" strokeWidth="1.300" />
        <path d="M8 9v4M11.500 10v3" stroke="#222" />
      </svg>
    </div>
  );
}
